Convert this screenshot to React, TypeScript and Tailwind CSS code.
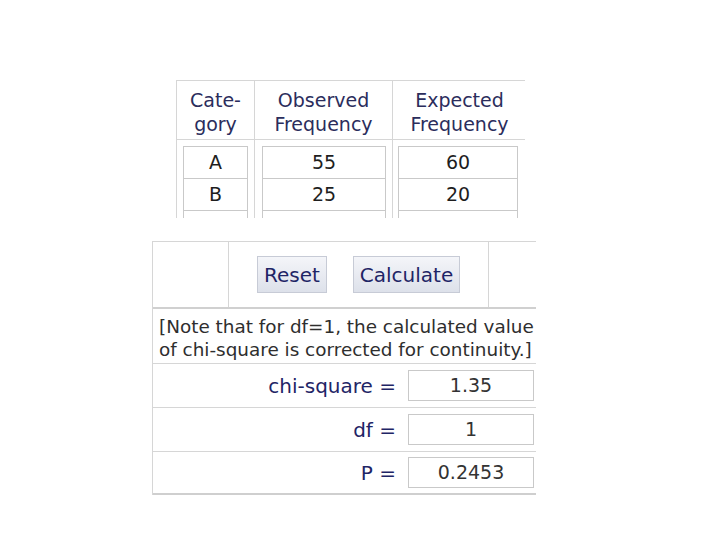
import React from 'react';

const font = { fontFamily: '"DejaVu Sans", Verdana, sans-serif' };

const ValueBox: React.FC<{ value: string; className?: string }> = ({ value, className = '' }) => (
    <div className={`shrink-0 h-[33px] border border-[#c9c9c9] bg-white flex items-center justify-center text-[19px] text-[#1e1e1e] ${className}`}>
        {value}
    </div>
);

const Column: React.FC<{ head: string[]; values: string[]; pad: string; width: string; divider?: boolean }> = ({ head, values, pad, width, divider }) => (
    <div className={`flex flex-col shrink-0 ${width} ${divider ? 'border-l border-[#d6d6d6]' : ''}`}>
        <div className="shrink-0 h-[59px] pt-[4px] border-b border-[#d6d6d6] flex flex-col items-center justify-center text-[19px] leading-[24px] text-[#2b2d5c]">
            {head.map((h) => <span key={h}>{h}</span>)}
        </div>
        <div className={`shrink-0 pt-[6px] ${pad} flex flex-col`}>
            {values.map((v, i) => (
                <ValueBox key={i} value={v} className={i > 0 ? '-mt-px' : ''} />
            ))}
        </div>
    </div>
);

const ResultRow: React.FC<{ label: string; value: string; last?: boolean }> = ({ label, value, last }) => (
    <div className={`flex items-center ${last ? 'border-b-2 border-[#cfcfcf] h-[43px]' : 'h-[44px] border-b border-[#d6d6d6]'}`}>
        <div className="w-[243px] text-right text-[20px] text-[#1f2566]">{label}</div>
        <div className="ml-[12px] w-[126px] h-[31px] border border-[#c9c9c9] flex items-center justify-center text-[19px] text-[#333]">
            {value}
        </div>
    </div>
);

export default function App() {
    return (
        <div className="w-[720px] h-[540px] bg-white overflow-hidden" style={font}>
            <div className="ml-[176px] mt-[80px] w-[349px] h-[138px] overflow-hidden border-t border-l border-[#d6d6d6] flex items-start">
                <Column head={['Cate-', 'gory']} values={['A', 'B', '']} pad="pl-[6px] pr-[6px]" width="w-[77px]" />
                <Column head={['Observed', 'Frequency']} values={['55', '25', '']} pad="pl-[7px] pr-[6px]" width="w-[138px]" divider />
                <Column head={['Expected', 'Frequency']} values={['60', '20', '']} pad="pl-[5px] pr-[8px]" width="w-[134px]" divider />
            </div>

            <div className="ml-[152px] mt-[23px] w-[384px] border-t border-l border-[#d6d6d6]">
                <div className="h-[67px] flex border-b-2 border-[#d0d0d0]">
                    <div className="w-[75px]" />
                    <div className="w-[261px] border-l border-r border-[#d6d6d6] flex items-center justify-center gap-[26px]">
                        <button className="h-[37px] w-[70px] border border-[#c7cbd6] bg-gradient-to-b from-[#f4f5f9] to-[#dde1ea] text-[20px] text-[#1f2566]">
                            Reset
                        </button>
                        <button className="h-[37px] w-[107px] border border-[#c7cbd6] bg-gradient-to-b from-[#f4f5f9] to-[#dde1ea] text-[20px] text-[#1f2566]">
                            Calculate
                        </button>
                    </div>
                    <div className="flex-1" />
                </div>
                <div className="h-[55px] pt-[3px] border-b border-[#d6d6d6] pl-[6px] flex flex-col justify-center text-[18.4px] leading-[23px] text-[#2e2e2e] whitespace-nowrap">
                    <span>[Note that for df=1, the calculated value</span>
                    <span>of chi-square is corrected for continuity.]</span>
                </div>
                <ResultRow label="chi-square =" value="1.35" />
                <ResultRow label="df =" value="1" />
                <ResultRow label="P =" value="0.2453" last />
            </div>
        </div>
    );
}
